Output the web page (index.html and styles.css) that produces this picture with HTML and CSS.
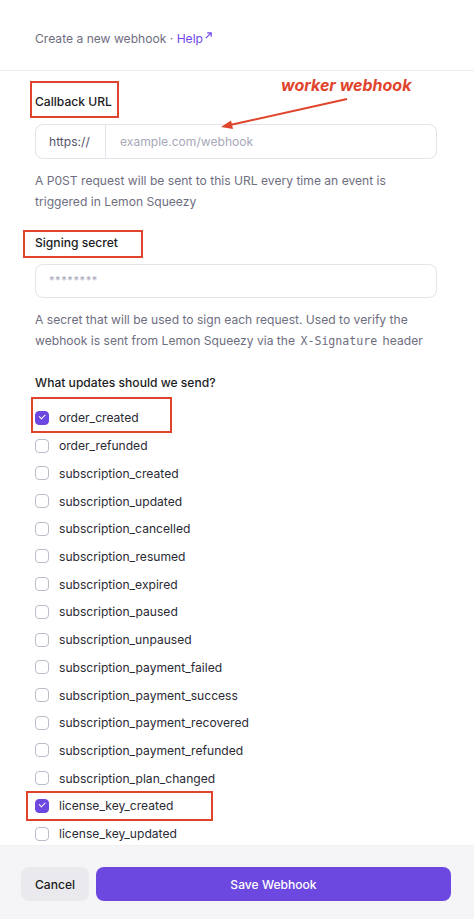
FILE: index.html
```html
<!DOCTYPE html>
<html>
<head>
<meta charset="utf-8">
<link rel="stylesheet" href="styles.css">
</head>
<body>
<div class="page">
  <div class="header">
    <span>Create a new webhook · </span><a class="help">Help<svg class="ext" width="9" height="9" viewBox="0 0 10 10"><path d="M2 8 L8 2 M3.5 2 H8 V6.5" fill="none" stroke="currentColor" stroke-width="1.3"/></svg></a>
  </div>
  <div class="main">
    <div class="field">
      <div class="label">Callback URL</div>
      <div class="input-group">
        <div class="addon">https://</div>
        <div class="input placeholder">example.com/webhook</div>
      </div>
      <p class="hint">A P0ST request will be sent to this URL every time an event is triggered in Lemon Squeezy</p>
    </div>
    <div class="field">
      <div class="label">Signing secret</div>
      <div class="input-single placeholder">********</div>
      <p class="hint">A secret that will be used to sign each request. Used to verify the webhook is sent from Lemon Squeezy via the <code>X-Signature</code> header</p>
    </div>
    <div class="field">
      <div class="label">What updates should we send?</div>
      <ul class="events">
        <li class="on"><span class="box"></span>order_created</li>
        <li><span class="box"></span>order_refunded</li>
        <li><span class="box"></span>subscription_created</li>
        <li><span class="box"></span>subscription_updated</li>
        <li><span class="box"></span>subscription_cancelled</li>
        <li><span class="box"></span>subscription_resumed</li>
        <li><span class="box"></span>subscription_expired</li>
        <li><span class="box"></span>subscription_paused</li>
        <li><span class="box"></span>subscription_unpaused</li>
        <li><span class="box"></span>subscription_payment_failed</li>
        <li><span class="box"></span>subscription_payment_success</li>
        <li><span class="box"></span>subscription_payment_recovered</li>
        <li><span class="box"></span>subscription_payment_refunded</li>
        <li><span class="box"></span>subscription_plan_changed</li>
        <li class="on"><span class="box"></span>license_key_created</li>
        <li><span class="box"></span>license_key_updated</li>
      </ul>
    </div>
  </div>
  <div class="footer">
    <button class="btn cancel">Cancel</button>
    <button class="btn save">Save Webhook</button>
  </div>

  <div class="mark m1"></div>
  <div class="mark m2"></div>
  <div class="mark m3"></div>
  <div class="mark m4"></div>
  <div class="note">worker webhook</div>
  <svg class="arrow" width="474" height="140" viewBox="0 0 474 140">
    <line x1="347" y1="99" x2="230" y2="125" stroke="#e0442c" stroke-width="2"/>
    <path d="M221 127 L231 120.5 L233 129 Z" fill="#e0442c"/>
  </svg>
</div>
</body>
</html>
```
FILE: styles.css
```css
* { box-sizing: border-box; }
html, body { margin: 0; padding: 0; background: #fff; }
body {
  font-family: Inter, "Noto Sans", sans-serif;
  font-size: 12.1px;
  color: #1c1c24;
}
.page { position: relative; width: 474px; height: 919px; overflow: hidden; }

.header {
  height: 71px;
  padding: 29px 35px 0;
  line-height: 20px;
  color: #6e6e80;
  border-bottom: 1px solid #ececf0;
}
.help { color: #7047eb; }
.ext { margin-left: 1px; vertical-align: 3px; }

.main { padding: 21px 37px 0 35px; }
.field { margin-bottom: 21px; }
.label { line-height: 20px; font-weight: 500; color: #1c1c24; margin-bottom: 12px; }

.input-group {
  display: flex;
  height: 35px;
  border: 1px solid #e3e3e9;
  border-radius: 8px;
}
.addon {
  width: 70px;
  padding-left: 13px;
  line-height: 33px;
  color: #55556a;
  border-right: 1px solid #e3e3e9;
}
.input { flex: 1; padding-left: 14px; line-height: 33px; }
.placeholder { color: #a8a8b8; }
.input-single {
  height: 34px;
  border: 1px solid #e3e3e9;
  border-radius: 8px;
  padding-left: 13px;
  line-height: 30px;
  font-size: 11px;
  letter-spacing: 0.6px;
}
.field:nth-child(2) .label { margin-bottom: 11px; }

.hint {
  margin: 11px 0 0;
  line-height: 21px;
  color: #6e6e80;
}
code {
  font-family: "DejaVu Sans Mono", "Liberation Mono", monospace;
  font-size: 11.6px;
  margin: 0 2px;
}

.events { list-style: none; margin: 0; padding: 0; margin-top: -1px; }
.events li {
  height: 27.73px;
  display: flex;
  align-items: center;
  color: #2a2a34;
}
.box {
  width: 14px;
  height: 14px;
  border: 1.5px solid #bdbdc9;
  border-radius: 4px;
  margin-right: 10px;
  background: #fff;
  position: relative;
}
.on .box { background: #6c47e0; border-color: #6c47e0; }
.on .box::after {
  content: "";
  position: absolute;
  left: 3px;
  top: 2.5px;
  width: 5px;
  height: 2.5px;
  border-left: 1.5px solid #fff;
  border-bottom: 1.5px solid #fff;
  transform: rotate(-45deg);
}

.footer {
  position: absolute;
  left: 0; right: 0; bottom: 0;
  height: 73px;
  background: #f5f5f7;
  display: flex;
  gap: 7px;
  padding: 21px 23px 0 21px;
  box-shadow: 0 -1px 0 #f0f0f3;
}
.btn {
  height: 34px;
  border: none;
  border-radius: 8px;
  font-family: Inter, "Noto Sans", sans-serif;
  font-size: 12.1px;
  font-weight: 500;
}
.cancel { width: 68px; background: #eaeaee; color: #1c1c24; }
.save { flex: 1; background: #6c47e0; color: #fff; }

.mark {
  position: absolute;
  border: 2px solid #e0442c;
}
.m1 { left: 30px; top: 81px; width: 89px; height: 37px; }
.m2 { left: 23px; top: 230px; width: 120px; height: 28px; }
.m3 { left: 31px; top: 397px; width: 141px; height: 36px; }
.m4 { left: 26px; top: 791px; width: 187px; height: 30px; }
.note {
  position: absolute;
  left: 281px;
  top: 74px;
  font-size: 16px;
  font-weight: 700;
  font-style: italic;
  color: #e0442c;
  line-height: 22px;
}
.arrow { position: absolute; left: 0; top: 0; }
```
